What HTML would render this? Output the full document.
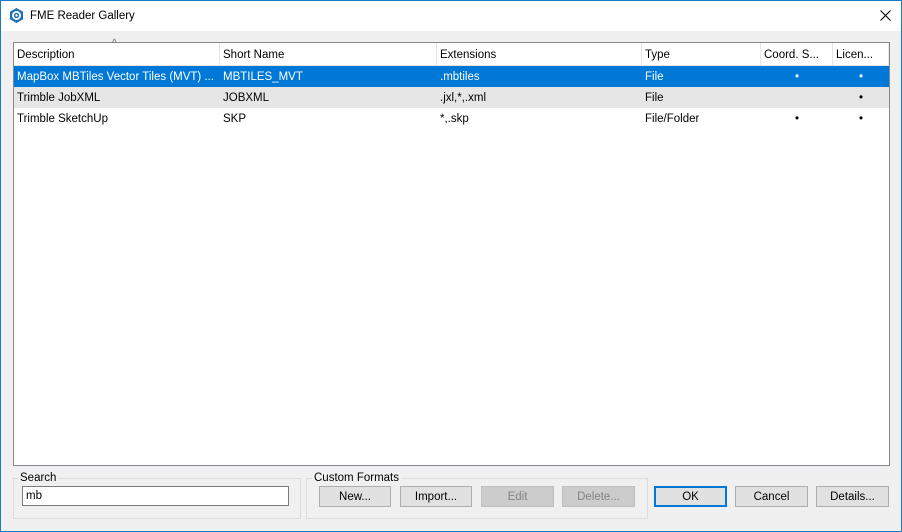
<!DOCTYPE html>
<html><head><style>
*{box-sizing:border-box;margin:0;padding:0}
body{width:902px;height:532px;background:#f0f0f0;font-family:"Liberation Sans",sans-serif;font-size:11.5px;color:#000;position:relative;overflow:hidden}
.frame{position:absolute;left:0;top:0;width:902px;height:532px;border:1px solid #1979ca;pointer-events:none}
.a{position:absolute}
.title{left:0;top:0;width:902px;height:31px;background:#fff}
.list{left:13px;top:42px;width:877px;height:424px;background:#fff;border:1px solid #828790}
.hdr{left:0;top:0;width:875px;height:23px;border-bottom:1px solid #e5e5e5}
.c{position:absolute;top:0;height:100%;padding-left:3px;padding-top:1px;line-height:21px;white-space:nowrap;overflow:hidden}
.hdr .c{border-right:1px solid #e5e5e5;padding-top:2px}
.row{left:0;width:875px;height:21px}
.btn{height:21px;background:#e1e1e1;border:1px solid #adadad;text-align:center;line-height:20px}
.dis{background:#cccccc;border-color:#bfbfbf;color:#838383}
.grp{border:1px solid #dcdcdc}
</style></head><body>
<div class="a title">
<svg class="a" style="left:9px;top:8px" width="15" height="15" viewBox="0 0 15 15"><polygon points="7.5,0 14,3.7 14,11.3 7.5,15 1,11.3 1,3.7" fill="#1c6fb5"/><circle cx="7.5" cy="7.5" r="3.6" fill="none" stroke="#fff" stroke-width="1.8"/><circle cx="7.5" cy="7.5" r="1.2" fill="#fff"/></svg>
<div class="a" style="left:30px;top:10px;font-size:11.5px">FME Reader Gallery</div>
<svg class="a" style="left:880px;top:10px" width="11" height="11" viewBox="0 0 11 11"><path d="M0.5 0.5L10.5 10.5M10.5 0.5L0.5 10.5" stroke="#000" stroke-width="1.1"/></svg>
</div>
<div class="a list">
<div class="a hdr">
<div class="c" style="left:0;width:206px">Description</div>
<div class="a" style="left:98px;top:-5px;font-size:10px;color:#666">^</div>
<div class="c" style="left:206px;width:217px">Short Name</div>
<div class="c" style="left:423px;width:205px">Extensions</div>
<div class="c" style="left:628px;width:119px">Type</div>
<div class="c" style="left:747px;width:72px">Coord. S...</div>
<div class="c" style="left:819px;width:56px">Licen...</div>
</div>
<div class="a row" style="top:23px;background:#0078d7;color:#fff">
<div class="c" style="left:0;width:206px">MapBox MBTiles Vector Tiles (MVT) ...</div>
<div class="c" style="left:206px">MBTILES_MVT</div>
<div class="c" style="left:423px">.mbtiles</div>
<div class="c" style="left:628px">File</div>
<div class="c" style="left:778px">•</div>
<div class="c" style="left:842px">•</div>
</div>
<div class="a row" style="top:44px;background:#e6e6e6">
<div class="c" style="left:0">Trimble JobXML</div>
<div class="c" style="left:206px">JOBXML</div>
<div class="c" style="left:423px">.jxl,*,.xml</div>
<div class="c" style="left:628px">File</div>
<div class="c" style="left:842px">•</div>
</div>
<div class="a row" style="top:65px">
<div class="c" style="left:0">Trimble SketchUp</div>
<div class="c" style="left:206px">SKP</div>
<div class="c" style="left:423px">*,.skp</div>
<div class="c" style="left:628px">File/Folder</div>
<div class="c" style="left:778px">•</div>
<div class="c" style="left:842px">•</div>
</div>
</div>
<div class="a grp" style="left:13px;top:478px;width:288px;height:41px"></div>
<div class="a" style="left:18px;top:472px;background:#f0f0f0;padding:0 2px">Search</div>
<div class="a" style="left:22px;top:486px;width:267px;height:20px;background:#fff;border:1px solid #7a7a7a;padding-left:3px;line-height:19px">mb</div>
<div class="a grp" style="left:306px;top:478px;width:342px;height:41px"></div>
<div class="a" style="left:312px;top:472px;background:#f0f0f0;padding:0 2px">Custom Formats</div>
<div class="a btn" style="left:319px;top:486px;width:72px">New...</div>
<div class="a btn" style="left:400px;top:486px;width:72px">Import...</div>
<div class="a btn dis" style="left:481px;top:486px;width:73px">Edit</div>
<div class="a btn dis" style="left:562px;top:486px;width:73px">Delete...</div>
<div class="a btn" style="left:654px;top:486px;width:73px;border:2px solid #0078d7;line-height:18px">OK</div>
<div class="a btn" style="left:735px;top:486px;width:73px">Cancel</div>
<div class="a btn" style="left:816px;top:486px;width:73px">Details...</div>
<div class="frame"></div>
</body></html>
